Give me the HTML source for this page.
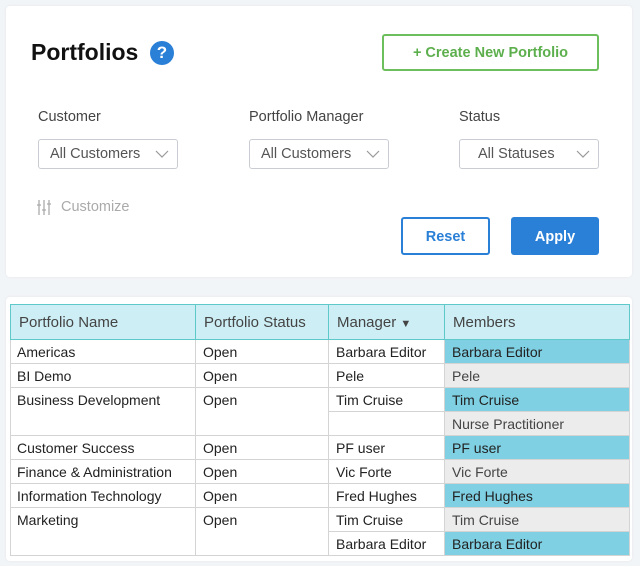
<!DOCTYPE html>
<html><head><style>
body{margin:0;width:640px;height:566px;background:#f2f5f8;font-family:"Liberation Sans",sans-serif;position:relative;overflow:hidden}
.card{position:absolute;background:#fff;border-radius:4px;box-shadow:0 0 3px rgba(0,0,0,.06)}
.a{position:absolute;white-space:nowrap}
.lbl{font-size:14.5px;color:#444}
.sel{position:absolute;height:30px;border:1px solid #c9ccd2;border-radius:3px;box-sizing:border-box;font-size:14.5px;color:#555;line-height:28px;padding-left:11px}
.sel svg{position:absolute;right:8px;top:10px}
.c{position:absolute;box-sizing:border-box;font-size:14px;color:#222;padding-left:7px;line-height:24px;border-right:1px solid #d4d4d4;border-bottom:1px solid #d4d4d4}
.h{background:#cdeef5;border:1px solid #5fc8c8;border-left:none;font-size:15px;color:#444;line-height:36px;padding-left:8px}
.b{background:#7fd0e3}.g{background:#ececec;color:#444}
</style></head><body>
<div class="card" style="left:6px;top:6px;width:626px;height:271px"></div>
<div class="a" style="left:31px;top:39px;font-size:23px;font-weight:bold;color:#111">Portfolios</div>
<div class="a" style="left:150px;top:41px;width:24px;height:24px;border-radius:50%;background:#2a7fd6;color:#fff;font-weight:bold;font-size:17px;text-align:center;line-height:24px">?</div>
<div class="a" style="left:382px;top:34px;width:217px;height:37px;border:2px solid #6cbf5c;border-radius:3px;box-sizing:border-box;color:#5caf4c;font-weight:bold;font-size:14.5px;text-align:center;line-height:35px">+ Create New Portfolio</div>
<div class="a lbl" style="left:38px;top:109px">Customer</div>
<div class="a lbl" style="left:249px;top:109px">Portfolio Manager</div>
<div class="a lbl" style="left:459px;top:109px">Status</div>
<div class="sel" style="left:38px;top:139px;width:140px">All Customers<svg width="14" height="8"><path d="M1 1l6 6 6-6" fill="none" stroke="#999" stroke-width="1.2"/></svg></div>
<div class="sel" style="left:249px;top:139px;width:140px">All Customers<svg width="14" height="8"><path d="M1 1l6 6 6-6" fill="none" stroke="#999" stroke-width="1.2"/></svg></div>
<div class="sel" style="left:459px;top:139px;width:140px;padding-left:18px">All Statuses<svg width="14" height="8"><path d="M1 1l6 6 6-6" fill="none" stroke="#999" stroke-width="1.2"/></svg></div>
<svg class="a" style="left:37px;top:200px" width="15" height="15"><g stroke="#aaa" stroke-width="1.3"><path d="M2 0v15M7 0v15M12 0v15"/><path d="M0 5h4M5 10h4M10 4h4"/></g></svg>
<div class="a" style="left:61px;top:199px;font-size:14.5px;color:#aaa">Customize</div>
<div class="a" style="left:401px;top:217px;width:89px;height:38px;border:2px solid #2a7fd6;border-radius:3px;box-sizing:border-box;color:#2a7fd6;font-weight:bold;font-size:14.5px;text-align:center;line-height:36px">Reset</div>
<div class="a" style="left:511px;top:217px;width:88px;height:38px;background:#2a7fd6;border-radius:3px;color:#fff;font-weight:bold;font-size:14.5px;text-align:center;line-height:40px">Apply</div>
<div class="card" style="left:6px;top:297px;width:626px;height:264px"></div>
<div class="c h" style="left:10px;top:304px;width:186px;height:36px;border-left:1px solid #5fc8c8">Portfolio Name</div>
<div class="c h" style="left:196px;top:304px;width:133px;height:36px">Portfolio Status</div>
<div class="c h" style="left:329px;top:304px;width:116px;height:36px">Manager <span style="font-size:11px">▼</span></div>
<div class="c h" style="left:445px;top:304px;width:185px;height:36px">Members</div>
<div style="position:absolute;left:10px;top:340px;width:1px;height:215px;background:#d4d4d4"></div>
<div class="c" style="left:10px;top:340px;width:186px;height:24px">Americas</div>
<div class="c" style="left:196px;top:340px;width:133px;height:24px">Open</div>
<div class="c" style="left:329px;top:340px;width:116px;height:24px">Barbara Editor</div>
<div class="c b" style="left:445px;top:340px;width:185px;height:24px">Barbara Editor</div>
<div class="c" style="left:10px;top:364px;width:186px;height:24px">BI Demo</div>
<div class="c" style="left:196px;top:364px;width:133px;height:24px">Open</div>
<div class="c" style="left:329px;top:364px;width:116px;height:24px">Pele</div>
<div class="c g" style="left:445px;top:364px;width:185px;height:24px">Pele</div>
<div class="c" style="left:10px;top:388px;width:186px;height:48px">Business Development</div>
<div class="c" style="left:196px;top:388px;width:133px;height:48px">Open</div>
<div class="c" style="left:329px;top:388px;width:116px;height:24px">Tim Cruise</div>
<div class="c b" style="left:445px;top:388px;width:185px;height:24px">Tim Cruise</div>
<div class="c" style="left:329px;top:412px;width:116px;height:24px"></div>
<div class="c g" style="left:445px;top:412px;width:185px;height:24px">Nurse Practitioner</div>
<div class="c" style="left:10px;top:436px;width:186px;height:24px">Customer Success</div>
<div class="c" style="left:196px;top:436px;width:133px;height:24px">Open</div>
<div class="c" style="left:329px;top:436px;width:116px;height:24px">PF user</div>
<div class="c b" style="left:445px;top:436px;width:185px;height:24px">PF user</div>
<div class="c" style="left:10px;top:460px;width:186px;height:24px">Finance &amp; Administration</div>
<div class="c" style="left:196px;top:460px;width:133px;height:24px">Open</div>
<div class="c" style="left:329px;top:460px;width:116px;height:24px">Vic Forte</div>
<div class="c g" style="left:445px;top:460px;width:185px;height:24px">Vic Forte</div>
<div class="c" style="left:10px;top:484px;width:186px;height:24px">Information Technology</div>
<div class="c" style="left:196px;top:484px;width:133px;height:24px">Open</div>
<div class="c" style="left:329px;top:484px;width:116px;height:24px">Fred Hughes</div>
<div class="c b" style="left:445px;top:484px;width:185px;height:24px">Fred Hughes</div>
<div class="c" style="left:10px;top:508px;width:186px;height:48px">Marketing</div>
<div class="c" style="left:196px;top:508px;width:133px;height:48px">Open</div>
<div class="c" style="left:329px;top:508px;width:116px;height:24px">Tim Cruise</div>
<div class="c g" style="left:445px;top:508px;width:185px;height:24px">Tim Cruise</div>
<div class="c" style="left:329px;top:532px;width:116px;height:24px">Barbara Editor</div>
<div class="c b" style="left:445px;top:532px;width:185px;height:24px">Barbara Editor</div>
</body></html>
